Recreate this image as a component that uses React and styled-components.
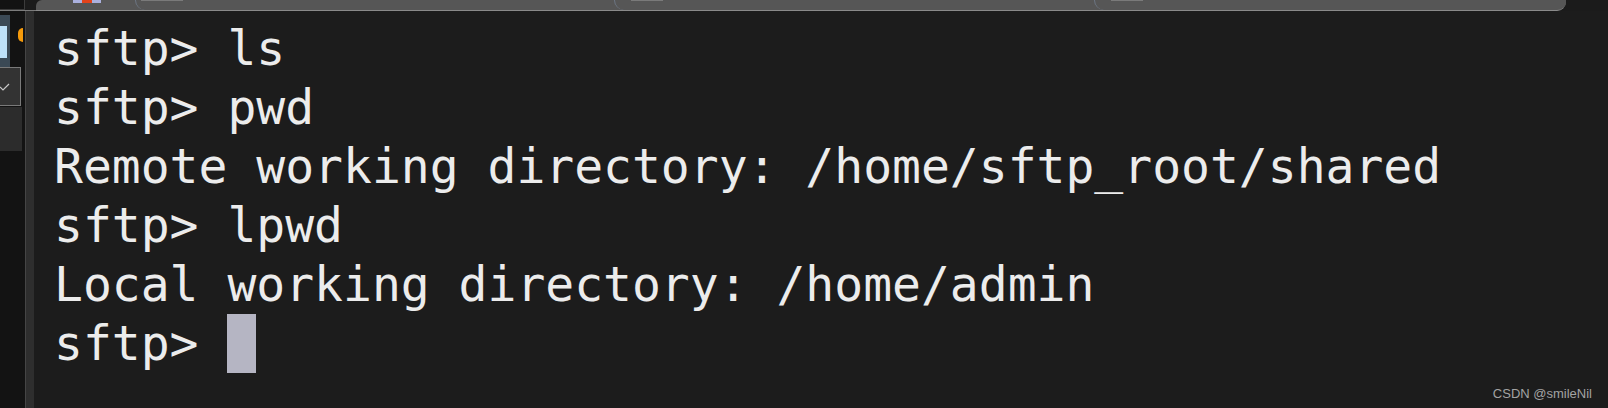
import React from 'react';
import styled, { createGlobalStyle } from 'styled-components';

const GlobalStyle = createGlobalStyle`
  html, body {
    margin: 0;
    padding: 0;
    background: #1c1c1c;
    overflow: hidden;
  }
  #root {
    width: 1608px;
    height: 408px;
  }
`;

const Screen = styled.div`
  width: 1608px;
  height: 408px;
  display: flex;
  flex-direction: column;
  background: #1b1b1b;
`;

const TopStrip = styled.div`
  height: 11px;
  display: flex;
  flex-shrink: 0;
  background: #1b1b1b;
`;

const LeftCap = styled.div`
  width: 36px;
  height: 10px;
  border-bottom: 1px solid #7c7c7c;
  display: flex;
`;

const CornerBox = styled.div`
  width: 24px;
  height: 9px;
  border: 1px solid #3c3c3c;
  border-top: none;
  border-left: none;
  background: #131313;
`;

const TabBar = styled.div`
  flex: 1;
  margin-right: 42px;
  height: 10px;
  display: flex;
  background: #565656;
  border-bottom: 1px solid #8a8a8a;
  border-top-left-radius: 6px;
  border-bottom-right-radius: 9px;
  overflow: hidden;
`;

const Tab = styled.div`
  width: ${(p) => (p.$w ? `${p.$w}px` : 'auto')};
  flex: ${(p) => (p.$w ? '0 0 auto' : '1')};
  height: 10px;
  display: flex;
  align-items: flex-start;
  padding-left: ${(p) => p.$pad}px;
  box-sizing: border-box;
  border-left: ${(p) => (p.$divider ? '1px solid #6d7785' : 'none')};
  border-bottom-left-radius: ${(p) => (p.$divider ? '10px' : '0')};
`;

const TabMark = styled.div`
  width: ${(p) => p.$w}px;
  height: 1px;
  background: #7a7a7a;
`;

const AppIcon = styled.div`
  width: 28px;
  height: 3px;
  display: flex;
  background: #aab0de;
`;

const AppIconDot = styled.div`
  width: 10px;
  height: 3px;
  margin-left: 9px;
  background: #e2431b;
`;

const Body = styled.div`
  flex: 1;
  display: flex;
  min-height: 0;
`;

const Rail = styled.div`
  width: 25px;
  flex-shrink: 0;
  background: #131313;
  display: flex;
  flex-direction: column;
  padding-top: 4px;
  box-sizing: border-box;
  overflow: hidden;
`;

const RailTop = styled.div`
  display: flex;
  align-items: flex-start;
  height: 52px;
`;

const Tile = styled.div`
  width: 10px;
  height: 52px;
  box-sizing: border-box;
  background: #3b4955;
  padding: 11px 3px 9px 0;
`;

const TileInner = styled.div`
  width: 7px;
  height: 32px;
  background: #bde0f8;
`;

const OrangeDot = styled.div`
  width: 5px;
  height: 14px;
  margin-top: 13px;
  margin-left: 8px;
  background: #f59a0b;
  border-radius: 7px 0 0 7px;
`;

const CheckBox = styled.div`
  width: 21px;
  height: 39px;
  box-sizing: border-box;
  border: 1px solid #7a7a7a;
  border-left: none;
  background: #333333;
  display: flex;
  align-items: center;
`;

const DarkBlock = styled.div`
  width: 22px;
  height: 44px;
  margin-top: 1px;
  background: #2c2c2c;
`;

const Gutter = styled.div`
  width: 9px;
  flex-shrink: 0;
  box-sizing: border-box;
  border-left: 1px solid #454545;
  background: #2e2e2e;
`;

const Terminal = styled.div`
  flex: 1;
  position: relative;
  background: #1c1c1c;
  padding: 8px 0 0 20px;
  font-family: 'DejaVu Sans Mono', 'Liberation Mono', monospace;
  font-size: 48px;
  line-height: 59px;
  color: #ececec;
  white-space: pre;
`;

const Line = styled.div`
  height: 59px;
`;

const Cursor = styled.span`
  display: inline-block;
  width: 29px;
  height: 59px;
  vertical-align: top;
  background: #b5b5c3;
`;

const Watermark = styled.div`
  position: absolute;
  right: 16px;
  bottom: 7px;
  font-family: 'Liberation Sans', Arial, sans-serif;
  font-size: 13px;
  line-height: 15px;
  color: #a3a3a3;
`;

const lines = [
  'sftp> ls',
  'sftp> pwd',
  'Remote working directory: /home/sftp_root/shared',
  'sftp> lpwd',
  'Local working directory: /home/admin',
];

export default function App() {
  return (
    <>
      <GlobalStyle />
      <Screen>
        <TopStrip>
          <LeftCap>
            <CornerBox />
          </LeftCap>
          <TabBar>
            <Tab $w={99} $pad={37}>
              <AppIcon>
                <AppIconDot />
              </AppIcon>
            </Tab>
            <Tab $w={479} $pad={5} $divider>
              <TabMark $w={42} />
            </Tab>
            <Tab $w={480} $pad={16} $divider>
              <TabMark $w={32} />
            </Tab>
            <Tab $pad={16} $divider>
              <TabMark $w={32} />
            </Tab>
          </TabBar>
        </TopStrip>
        <Body>
          <Rail>
            <RailTop>
              <Tile>
                <TileInner />
              </Tile>
              <OrangeDot />
            </RailTop>
            <CheckBox>
              <svg width="10" height="8" viewBox="0 0 10 8">
                <path d="M0 4 L3 7 L9 1" fill="none" stroke="#c8c8c8" strokeWidth="1.2" />
              </svg>
            </CheckBox>
            <DarkBlock />
          </Rail>
          <Gutter />
          <Terminal>
            {lines.map((l) => (
              <Line key={l}>{l}</Line>
            ))}
            <Line>
              {'sftp> '}
              <Cursor />
            </Line>
            <Watermark>CSDN @smileNil</Watermark>
          </Terminal>
        </Body>
      </Screen>
    </>
  );
}
